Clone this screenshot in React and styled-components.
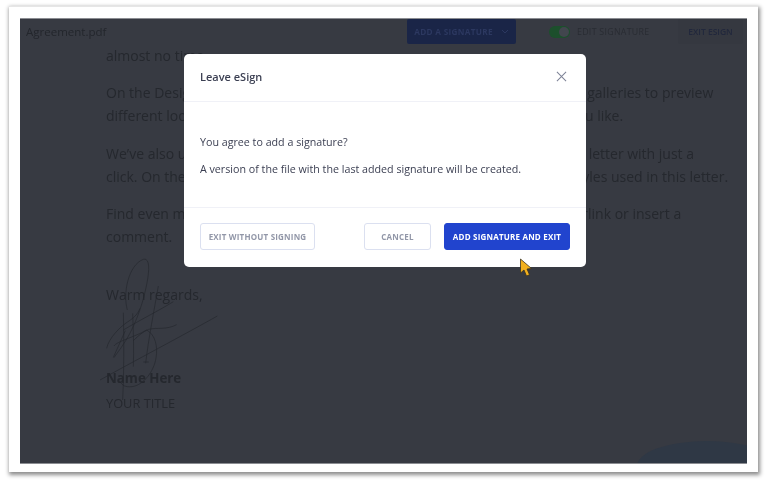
import React from 'react'
import styled, { createGlobalStyle } from 'styled-components'

const GlobalStyle = createGlobalStyle`
  html, body {
    margin: 0;
    padding: 0;
    background: #fff;
  }
  body {
    font-family: "Open Sans", "Noto Sans", sans-serif;
  }
`

const Page = styled.div`
  width: 768px;
  height: 485px;
  padding: 6px 10px 13px 9px;
  box-sizing: border-box;
  overflow: hidden;
  filter: blur(0.4px);
`

const Frame = styled.div`
  height: 100%;
  box-sizing: border-box;
  padding: 11px 11px 10px 11px;
  background: #fff;
  border-top: 1px solid #e6e6e6;
  box-shadow: 1px 2px 4px 1px rgba(0, 0, 0, .45);
`

const Screen = styled.div`
  position: relative;
  height: 100%;
  overflow: hidden;
  display: flex;
  flex-direction: column;
  background: #373a42;
  border-top: 1px solid #8b8d92;
  border-bottom: 1px solid #8b8d92;
`

const TopBar = styled.div`
  flex: none;
  height: 25px;
  display: flex;
  align-items: center;
  padding: 0 4px 0 6px;
  color: #23262c;
  font-size: 11.5px;
`

const FileName = styled.div`
  flex: 1;
`

const SignatureMenu = styled.div`
  width: 109px;
  height: 25px;
  margin-right: 33px;
  display: flex;
  align-items: center;
  justify-content: center;
  gap: 8px;
  border-radius: 2px;
  background: #1a2547;
  color: #2c3860;
  font-size: 8.2px;
  font-weight: 700;
  letter-spacing: .3px;
`

const Toggle = styled.div`
  width: 21px;
  height: 12px;
  margin-right: 7px;
  padding: 1px;
  box-sizing: border-box;
  display: flex;
  justify-content: flex-end;
  border-radius: 6px;
  background: #1c4f2c;
`

const Knob = styled.div`
  width: 10px;
  height: 10px;
  border-radius: 50%;
  background: #42464e;
`

const EditLabel = styled.div`
  margin-right: 28px;
  width: 73px;
  white-space: nowrap;
  color: #292c33;
  font-size: 8.8px;
  letter-spacing: .3px;
`

const ExitButton = styled.div`
  width: 65px;
  height: 25px;
  display: flex;
  align-items: center;
  justify-content: center;
  border-radius: 2px;
  background: #353840;
  color: #22283c;
  font-size: 8.5px;
  font-weight: 600;
`

const Doc = styled.div`
  flex: 1;
  padding: 0 0 0 86px;
  color: #25282e;
  font-size: 14px;
  line-height: 23px;
`

const Para = styled.p`
  margin: 0 0 ${p => p.$after || 15}px;
  width: 628px;
  white-space: nowrap;
`

const Name = styled.p`
  margin: 0 0 2px;
  font-size: 13.3px;
  font-weight: 700;
`

const JobTitle = styled.p`
  margin: 0;
  font-size: 12.8px;
`

const Scribble = styled.svg`
  position: absolute;
  left: 70px;
  top: 231px;
`

const Blob = styled.div`
  position: absolute;
  right: -30px;
  bottom: -28px;
  width: 140px;
  height: 50px;
  border-radius: 50%;
  background: #2f3845;
`

const Modal = styled.div`
  position: absolute;
  left: 164px;
  top: 35px;
  width: 402px;
  height: 213px;
  display: flex;
  flex-direction: column;
  background: #fff;
  border-radius: 5px;
  color: #3b3f52;
`

const ModalHeader = styled.div`
  flex: none;
  height: 48px;
  padding: 0 19px 2px 16px;
  box-sizing: border-box;
  display: flex;
  align-items: center;
  justify-content: space-between;
  border-bottom: 1px solid #f0f1f7;
  font-size: 11px;
  font-weight: 600;
`

const ModalBody = styled.div`
  flex: 1;
  padding: 32px 16px 0;
  font-size: 10.7px;
  line-height: 16px;
`

const BodyLine = styled.p`
  margin: 0 0 11px;
`

const ModalFooter = styled.div`
  flex: none;
  height: 60px;
  padding: 15px 16px 0;
  box-sizing: border-box;
  display: flex;
  align-items: flex-start;
  gap: 13px;
  border-top: 1px solid #f0f1f7;
`

const Button = styled.div`
  height: 27px;
  width: ${p => p.$width}px;
  margin-right: ${p => p.$push ? 'auto' : '0'};
  box-sizing: border-box;
  display: flex;
  align-items: center;
  justify-content: center;
  border-radius: 3px;
  border: 1px solid ${p => p.$primary ? '#2144ce' : '#dbe0f0'};
  background: ${p => p.$primary ? '#2144ce' : '#fff'};
  color: ${p => p.$primary ? '#fff' : '#9297a8'};
  font-size: 8px;
  font-weight: 700;
  letter-spacing: .2px;
`

const Pointer = styled.svg`
  position: absolute;
  left: 499px;
  top: 239px;
`

const Chevron = () => (
  <svg width="8" height="5" viewBox="0 0 8 5" fill="none" stroke="#2c3860" strokeWidth="1">
    <path d="M1 1l3 3 3-3" />
  </svg>
)

const CloseIcon = () => (
  <svg width="11" height="11" viewBox="0 0 12 12" fill="none" stroke="#7d8296" strokeWidth="1.1">
    <path d="M1 1l10 10M11 1L1 11" />
  </svg>
)

const App = () => (
  <>
    <GlobalStyle />
    <Page>
      <Frame>
        <Screen>
          <TopBar>
            <FileName>Agreement.pdf</FileName>
            <SignatureMenu>ADD A SIGNATURE <Chevron /></SignatureMenu>
            <Toggle><Knob /></Toggle>
            <EditLabel>EDIT SIGNATURE</EditLabel>
            <ExitButton>EXIT ESIGN</ExitButton>
          </TopBar>
          <Doc>
            <Para $after={14}>almost no time.</Para>
            <Para>On the Design tab of the ribbon, check out the Themes, Colors, and Fonts galleries to preview<br />different look from a variety of choices. Then just click to apply the one you like.</Para>
            <Para $after={14}>We’ve also used paragraph styles that let you match the formatting in this letter with just a<br />click. On the Home tab of the ribbon, check out the Styles gallery for all styles used in this letter.</Para>
            <Para $after={35}>Find even more easy-to-use tools on the Insert tab, such as to add a hyperlink or insert a<br />comment.</Para>
            <Para $after={61}>Warm regards,</Para>
            <Name>Name Here</Name>
            <JobTitle>YOUR TITLE</JobTitle>
          </Doc>
          <Scribble width="150" height="170" viewBox="0 0 450 510" fill="none" stroke="#24272e" strokeWidth="2">
            <path d="M112 180C98 130 115 45 160 28c22-6 18 40 8 85-12 60-40 130-68 170-10 16-22 30-28 40" />
            <path d="M30 390C120 340 290 250 382 198" />
            <path d="M50 295c6-30 40-66 70-84 14-10 24-20 30-36M100 240c50-30 110-60 150-85" />
            <path d="M205 108c-12 70-30 160-38 232" />
            <path d="M100 188c2 80 2 180-2 262" />
            <path d="M128 190c2 50 4 110 2 160" />
            <path d="M72 288c8-14 60-26 98-48 26 14 34 50 28 84-6 40-38 82-72 86-20 2-30-4-34-14" />
            <path d="M130 272c14-14 30-28 46-34 26-6 54 2 84-14" />
            <path d="M70 322l36-80M160 336h16" />
          </Scribble>
          <Blob />
          <Modal>
            <ModalHeader>Leave eSign <CloseIcon /></ModalHeader>
            <ModalBody>
              <BodyLine>You agree to add a signature?</BodyLine>
              <BodyLine>A version of the file with the last added signature will be created.</BodyLine>
            </ModalBody>
            <ModalFooter>
              <Button $width={115} $push>EXIT WITHOUT SIGNING</Button>
              <Button $width={67}>CANCEL</Button>
              <Button $width={126} $primary>ADD SIGNATURE AND EXIT</Button>
            </ModalFooter>
          </Modal>
          <Pointer width="14" height="20" viewBox="0 0 14 20">
            <path d="M1.5 1l0 14 3.5-3 2.5 6 3-1.2-2.5-5.8 4.5-.5z" fill="#f2b01e" stroke="#3a3220" strokeWidth=".8" />
          </Pointer>
        </Screen>
      </Frame>
    </Page>
  </>
)

export default App
